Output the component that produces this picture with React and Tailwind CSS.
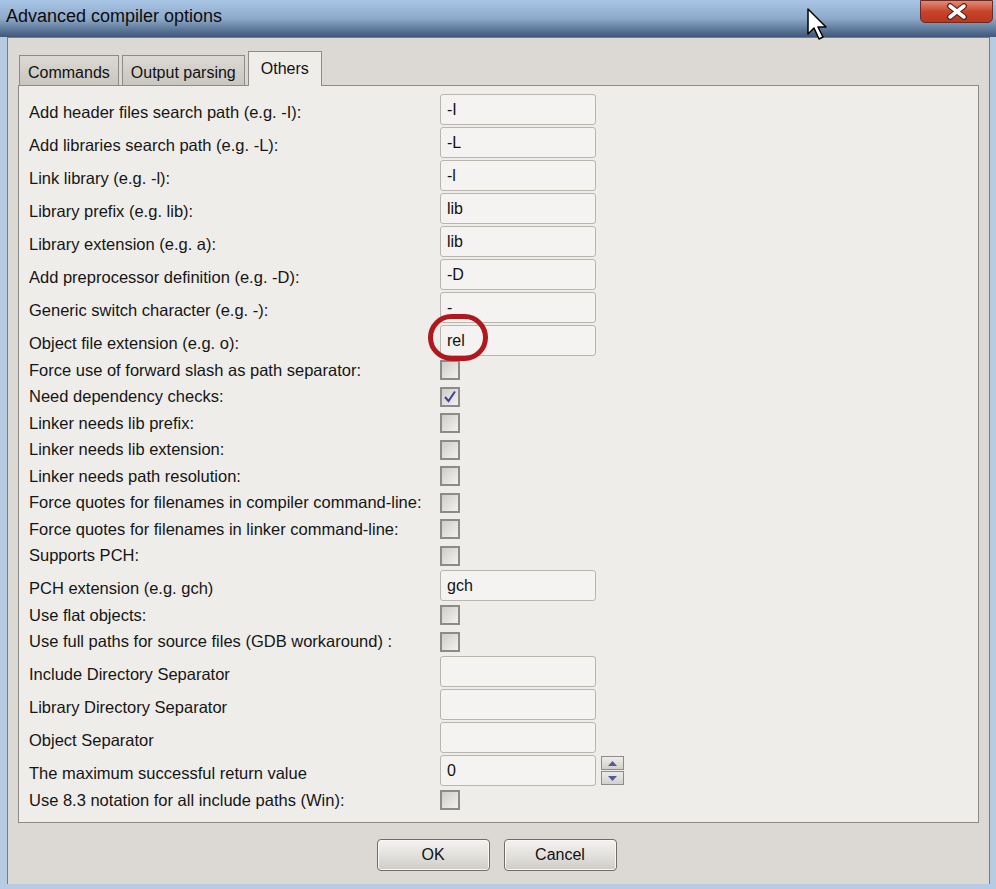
import React from 'react';

const rows = [
  { label: 'Add header files search path (e.g. -I):', type: 'text', value: '-I' },
  { label: 'Add libraries search path (e.g. -L):', type: 'text', value: '-L' },
  { label: 'Link library (e.g. -l):', type: 'text', value: '-l' },
  { label: 'Library prefix (e.g. lib):', type: 'text', value: 'lib' },
  { label: 'Library extension (e.g. a):', type: 'text', value: 'lib' },
  { label: 'Add preprocessor definition (e.g. -D):', type: 'text', value: '-D' },
  { label: 'Generic switch character (e.g. -):', type: 'text', value: '-' },
  { label: 'Object file extension (e.g. o):', type: 'text', value: 'rel', circled: true },
  { label: 'Force use of forward slash as path separator:', type: 'check' },
  { label: 'Need dependency checks:', type: 'check', checked: true },
  { label: 'Linker needs lib prefix:', type: 'check' },
  { label: 'Linker needs lib extension:', type: 'check' },
  { label: 'Linker needs path resolution:', type: 'check' },
  { label: 'Force quotes for filenames in compiler command-line:', type: 'check' },
  { label: 'Force quotes for filenames in linker command-line:', type: 'check' },
  { label: 'Supports PCH:', type: 'check' },
  { label: 'PCH extension (e.g. gch)', type: 'text', value: 'gch' },
  { label: 'Use flat objects:', type: 'check' },
  { label: 'Use full paths for source files (GDB workaround) :', type: 'check' },
  { label: 'Include Directory Separator', type: 'text', value: '' },
  { label: 'Library Directory Separator', type: 'text', value: '' },
  { label: 'Object Separator', type: 'text', value: '' },
  { label: 'The maximum successful return value', type: 'spin', value: '0' },
  { label: 'Use 8.3 notation for all include paths (Win):', type: 'check' },
];

const Checkbox = ({ checked }) => (
  <div className="w-[20px] h-[20px] border-2 border-[#8d8b87] bg-gradient-to-br from-[#cfcdc9] to-[#f3f2f0] flex items-center justify-center">
    {checked && (
      <svg width="14" height="14" viewBox="0 0 14 14">
        <path d="M2 7 L5.5 11 L12 1.5" fill="none" stroke="#3d42a3" strokeWidth="2" />
      </svg>
    )}
  </div>
);

const TextBox = ({ value, circled }) => (
  <div className="relative w-[156px] h-[31px] border border-[#b9b6b0] rounded-[3px] bg-[#f4f3f1] px-[6px] pt-[3px] text-[16px] text-[#111]">
    {value}
    {circled && (
      <div className="absolute -left-[13px] -top-[12px] w-[60px] h-[47px] rounded-full border-[5px] border-[#b0181d]" />
    )}
  </div>
);

const Spinner = () => (
  <div className="flex flex-col gap-[1px] ml-[5px]">
    <div className="w-[23px] h-[14px] border border-[#8d8b87] bg-gradient-to-b from-[#eeece9] to-[#d2d0cc] flex items-center justify-center">
      <svg width="9" height="5" viewBox="0 0 9 5"><path d="M0 5 L4.5 0 L9 5 Z" fill="#555a99" /></svg>
    </div>
    <div className="w-[23px] h-[14px] border border-[#8d8b87] bg-gradient-to-b from-[#eeece9] to-[#d2d0cc] flex items-center justify-center">
      <svg width="9" height="5" viewBox="0 0 9 5"><path d="M0 0 L9 0 L4.5 5 Z" fill="#555a99" /></svg>
    </div>
  </div>
);

const Row = ({ row }) => {
  const tall = row.type !== 'check';
  return (
    <div className={`flex items-center ${tall ? 'h-[33px]' : 'h-[26.5px]'}`}>
      <div className={`w-[411px] text-[16.5px] text-[#151515] whitespace-nowrap ${tall ? 'pt-[6px]' : ''}`}>
        {row.label}
      </div>
      {row.type === 'check' && <Checkbox checked={row.checked} />}
      {row.type === 'text' && <TextBox value={row.value} circled={row.circled} />}
      {row.type === 'spin' && (
        <div className="flex items-center">
          <TextBox value={row.value} />
          <Spinner />
        </div>
      )}
    </div>
  );
};

const Tab = ({ label, active }) => (
  <div
    className={
      active
        ? 'relative z-10 -mb-px h-[35px] px-[12px] pt-[5px] border border-b-0 border-[#8e8a85] bg-[#efedea] text-[16px] text-[#111]'
        : 'h-[30px] px-[8px] pt-[5px] border border-b-0 border-[#8e8a85] bg-gradient-to-b from-[#dcd9d4] to-[#c9c5bf] text-[16px] text-[#111]'
    }
  >
    {label}
  </div>
);

const Btn = ({ children }) => (
  <button className="w-[113px] h-[32px] rounded-[4px] border border-[#6f6d6a] bg-gradient-to-b from-[#f3f2f0] via-[#e3e1dd] to-[#cfccc7] text-[16px] text-[#111] shadow-[inset_0_0_0_1px_#f8f8f8]">
    {children}
  </button>
);

export default function App() {
  return (
    <div
      className="relative w-[996px] h-[889px] flex flex-col bg-[#b7cbe2] overflow-hidden"
      style={{ fontFamily: '"Liberation Sans", Arial, sans-serif' }}
    >
      {/* Title bar */}
      <div className="relative h-[37px] bg-gradient-to-b from-[#a9c5e6] via-[#8eaacb] to-[#3f5778] flex items-start px-[6px] pt-[3px]">
        <span className="text-[18px] text-[#0c0c0c]">Advanced compiler options</span>
        <div className="absolute right-[3px] top-0 w-[73px] h-[23px] rounded-b-[5px] border border-[#6b2a22] bg-gradient-to-b from-[#e08a78] via-[#c9432a] to-[#b83820] flex items-center justify-center">
          <svg width="22" height="17" viewBox="0 0 22 17">
            <path d="M4 3 L18 14 M18 3 L4 14" stroke="#5a2018" strokeWidth="6" strokeLinecap="round" />
            <path d="M4 3 L18 14 M18 3 L4 14" stroke="#ffffff" strokeWidth="3.5" strokeLinecap="round" />
          </svg>
        </div>
        <svg className="absolute left-[807px] top-[8px]" width="24" height="34" viewBox="0 0 24 34">
          <path d="M1 1 L1 26 L7 20 L12 31 L16 29 L11 19 L19 19 Z" fill="#fff" stroke="#000" strokeWidth="1.5" strokeLinejoin="round" />
        </svg>
      </div>

      <div className="flex flex-1">
        <div className="w-[7px]" />
        {/* Client area */}
        <div className="flex-1 flex flex-col bg-[#dcd9d4] border-t border-l border-r border-[#6f7d8c] px-[10px] pt-[13px]">
          <div className="flex items-end gap-[3px] pl-[1px] h-[34px]">
            <Tab label="Commands" />
            <Tab label="Output parsing" />
            <Tab label="Others" active />
          </div>
          <div className="h-[738px] border border-[#8e8a85] bg-[#efedea] pl-[10px] pt-[7px]">
            {rows.map((r, i) => (
              <Row key={i} row={r} />
            ))}
          </div>
          <div className="flex justify-center gap-[14px] pt-[16px] pr-[4px]">
            <Btn>OK</Btn>
            <Btn>Cancel</Btn>
          </div>
        </div>
        <div className="w-[6px]" />
      </div>
      <div className="h-[5px]" />
    </div>
  );
}
